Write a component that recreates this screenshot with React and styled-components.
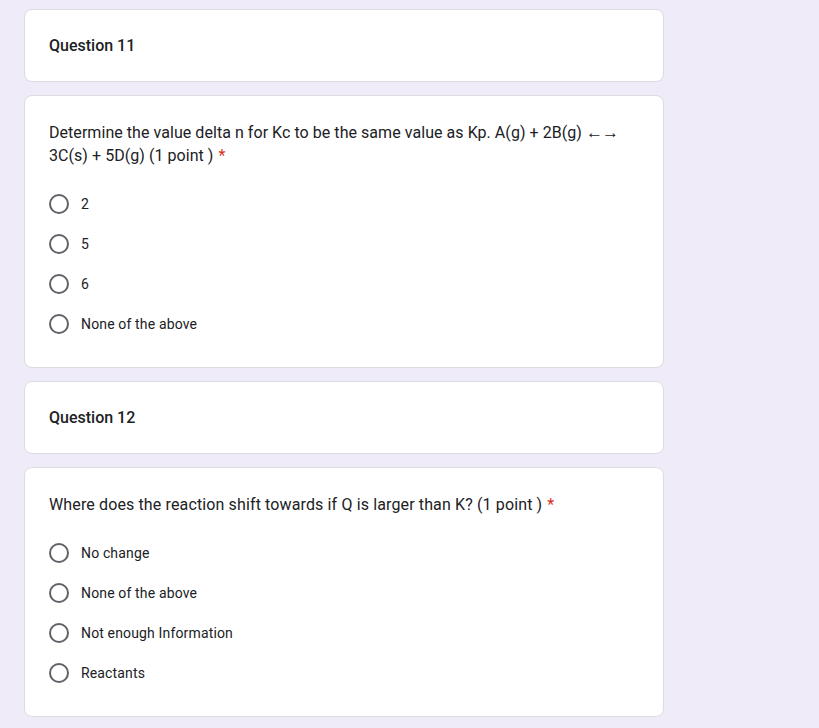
import React from "react";
import styled, { createGlobalStyle } from "styled-components";

const Global = createGlobalStyle`
  html, body { margin: 0; padding: 0; background: #f0ebf8; }
  body { font-family: Roboto, "Liberation Sans", Arial, sans-serif; color: #202124; }
`;

const Page = styled.div`
  display: flex;
  flex-direction: column;
  gap: 13px;
  width: 640px;
  padding: 9px 0 12px 24px;
`;

const Card = styled.div`
  background: #fff;
  border: 1px solid #dadce0;
  border-radius: 8px;
  padding: 24px 24px 23px;
`;

const SectionTitle = styled.div`
  font-size: 16px;
  font-weight: 500;
  line-height: 24px;
  letter-spacing: 0;
`;

const QuestionText = styled.div`
  font-size: 16px;
  line-height: 23px;
  letter-spacing: ${(p) => (p.$wide ? "0.13px" : "0.05px")};
  padding-top: 1px;
`;

const Arrows = styled.span`
  font-size: 17px;
  font-weight: 500;
  letter-spacing: -1px;
`;

const Required = styled.span`
  color: #d93025;
  margin-left: 5px;
`;

const Options = styled.div`
  display: flex;
  flex-direction: column;
  margin-top: 17px;
`;

const Option = styled.label`
  display: flex;
  align-items: center;
  height: 40px;
  gap: 12px;
  font-size: 14px;
  letter-spacing: 0.15px;
  color: #202124;
`;

const Radio = styled.span`
  width: 16px;
  height: 16px;
  border: 2px solid #5f6368;
  border-radius: 50%;
  flex: none;
`;

const questions = [
  {
    title: "Question 11",
    text: (
      <>
        Determine the value delta n for Kc to be the same value as Kp. A(g) + 2B(g) <Arrows>←→</Arrows>
        <br />
        3C(s) + 5D(g) (1 point )
      </>
    ),
    options: ["2", "5", "6", "None of the above"],
  },
  {
    title: "Question 12",
    wide: true,
    text: <>Where does the reaction shift towards if Q is larger than K? (1 point )</>,
    options: ["No change", "None of the above", "Not enough Information", "Reactants"],
  },
];

export default function App() {
  return (
    <>
      <Global />
      <Page>
        {questions.map((q) => (
          <React.Fragment key={q.title}>
            <Card>
              <SectionTitle>{q.title}</SectionTitle>
            </Card>
            <Card>
              <QuestionText $wide={q.wide}>
                {q.text}
                <Required>*</Required>
              </QuestionText>
              <Options>
                {q.options.map((o) => (
                  <Option key={o}>
                    <Radio />
                    {o}
                  </Option>
                ))}
              </Options>
            </Card>
          </React.Fragment>
        ))}
      </Page>
    </>
  );
}
